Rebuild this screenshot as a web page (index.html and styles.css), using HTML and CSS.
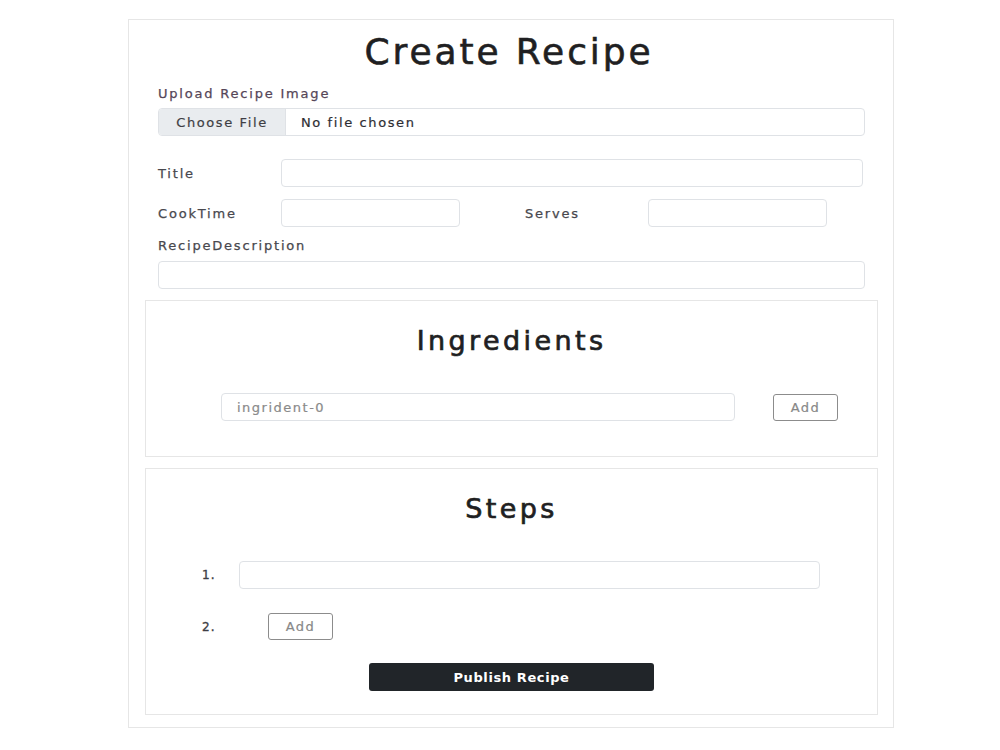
FILE: index.html
```html
<!DOCTYPE html>
<html>
<head>
<meta charset="utf-8">
<link rel="stylesheet" href="styles.css">
</head>
<body>
<div class="page">
  <h1 class="title">Create Recipe</h1>
  <div class="form">
    <div class="label upload-label">Upload Recipe Image</div>
    <div class="file">
      <span class="file-btn">Choose File</span>
      <span class="file-text">No file chosen</span>
    </div>
    <div class="row row-title">
      <span class="label side">Title</span>
      <span class="input grow"></span>
    </div>
    <div class="row row-cook">
      <span class="label side">CookTime</span>
      <span class="input small"></span>
      <span class="label side serves">Serves</span>
      <span class="input small"></span>
    </div>
    <div class="label desc-label">RecipeDescription</div>
    <div class="input full"></div>
  </div>
  <div class="card ingredients">
    <h2 class="card-title">Ingredients</h2>
    <div class="ing-row">
      <span class="input ing-input"><span class="ph">ingrident-0</span></span>
      <span class="btn-add">Add</span>
    </div>
  </div>
  <div class="card steps">
    <h2 class="card-title">Steps</h2>
    <div class="step step1">
      <span class="num">1.</span>
      <span class="input step-input"></span>
    </div>
    <div class="step step2">
      <span class="num">2.</span>
      <span class="btn-add">Add</span>
    </div>
    <div class="publish-wrap"><span class="publish">Publish Recipe</span></div>
  </div>
</div>
</body>
</html>
```
FILE: styles.css
```css
* { box-sizing: border-box; }
html, body { margin: 0; padding: 0; background: #fff; }
body { font-family: "DejaVu Sans", "Open Sans", sans-serif; color: #333; }

.page {
  margin: 19px 0 0 128px;
  width: 766px;
  height: 709px;
  border: 1px solid #e6e6e6;
  padding-top: 12px;
}
.title {
  margin: 0;
  text-align: center;
  font-size: 36px;
  font-weight: 400;
  letter-spacing: 2.9px;
  line-height: 40px;
  color: #1f1f22;
  -webkit-text-stroke: 0.6px #1f1f22;
  padding-right: 4px;
}
.form { padding: 0 28px 0 29px; }
.label {
  font-size: 13px;
  letter-spacing: 1.8px;
  color: #48484e;
  -webkit-text-stroke: 0.25px #48484e;
}
.upload-label { margin-top: 12px; line-height: 20px; color: #554658; -webkit-text-stroke: 0.25px #554658; }
.file {
  display: flex;
  height: 28px;
  border: 1px solid #dfe2e6;
  border-radius: 4px;
  overflow: hidden;
  margin-top: 4px;
  font-size: 13px;
  letter-spacing: 1.6px;
}
.file-btn {
  width: 127px;
  background: #e9ecef;
  border-right: 1px solid #dfe2e6;
  display: flex; align-items: center; justify-content: center;
  color: #3e3e44;
  -webkit-text-stroke: 0.2px #3e3e44;
}
.file-text { display: flex; align-items: center; padding-left: 15px; color: #2e2e34; -webkit-text-stroke: 0.2px #2e2e34; }

.row { display: flex; align-items: center; }
.row-title { margin-top: 23px; padding-right: 2px; }
.row-cook { margin-top: 12px; }
.side { width: 123px; flex: none; }
.serves { margin-left: 65px; }
.input {
  display: block;
  height: 28px;
  border: 1px solid #dfe2e6;
  border-radius: 4px;
  background: #fff;
}
.grow { flex: 1; }
.small { width: 179px; flex: none; }
.desc-label { margin-top: 9px; line-height: 20px; }
.full { margin-top: 5px; }

.card {
  margin: 0 15px 0 16px;
  border: 1px solid #e6e6e6;
}
.ingredients { margin-top: 11px; height: 157px; padding-top: 23px; }
.steps { margin-top: 11px; height: 247px; padding-top: 23px; }
.card-title {
  margin: 0;
  text-align: center;
  font-size: 27px;
  font-weight: 400;
  letter-spacing: 3.4px;
  line-height: 34px;
  color: #1f1f22;
  -webkit-text-stroke: 0.7px #1f1f22;
}
.ing-row { display: flex; align-items: center; margin-top: 35px; padding-left: 75px; }
.ing-input { width: 514px; display: flex; align-items: center; padding-left: 15px; }
.ph { font-size: 13px; letter-spacing: 1.5px; color: #8a8a8a; -webkit-text-stroke: 0.2px #8a8a8a; }
.btn-add {
  display: flex; align-items: center; justify-content: center;
  width: 65px; height: 27px;
  border: 1.5px solid #8c8c8c;
  border-radius: 3px;
  font-size: 13px;
  letter-spacing: 1.5px;
  color: #888;
  -webkit-text-stroke: 0.2px #888;
}
.ing-row .btn-add { margin-left: 38px; }

.step { display: flex; align-items: center; }
.num {
  font-size: 12px; color: #3e3e44; width: 37px; padding-left: 56px;
  box-sizing: content-box; letter-spacing: 1px;
  -webkit-text-stroke: 0.35px #3e3e44;
}
.step1 { margin-top: 35px; }
.step-input { width: 581px; }
.step2 { margin-top: 24px; }
.step2 .btn-add { margin-left: 29px; }
.publish-wrap { display: flex; justify-content: center; margin-top: 23px; }
.publish {
  width: 285px; height: 28px;
  background: #212529;
  color: #fff;
  border-radius: 3px;
  display: flex; align-items: center; justify-content: center;
  font-size: 13px; font-weight: 700;
  letter-spacing: 0.6px;
}
```
